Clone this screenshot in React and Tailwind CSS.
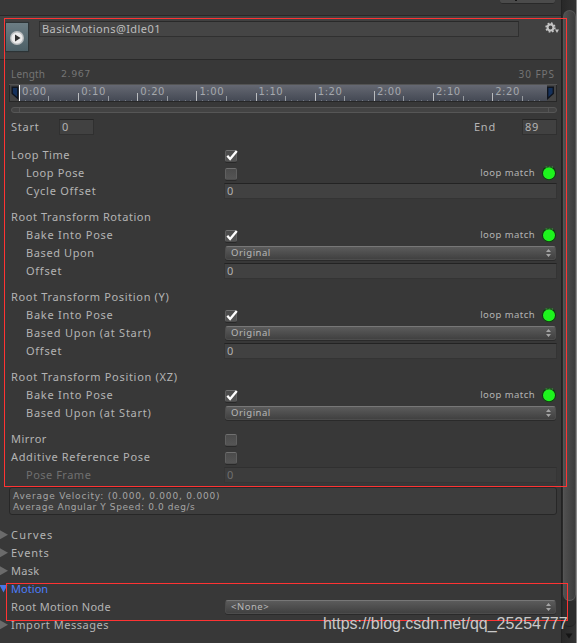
import React from 'react';
import clsx from 'clsx';

const TICKS = Array.from({ length: 90 }, (_, i) => i);
const MARKS = ['0:00', '0:10', '0:20', '1:00', '1:10', '1:20', '2:00', '2:10', '2:20'];
const STEP = 5.915;

const Check = ({ checked }) => (
  <div className="w-3 h-3 mt-1 rounded-[2px] border border-[#707070] border-x-[#606060] border-b-[#4c4c4c] bg-linear-to-b from-[#4b4b4b] to-[#555555] shadow-[0_1px_0_#292929]">
    {checked && (
      <svg className="block -ml-px -mt-px w-[14px] h-3 overflow-visible" viewBox="0 0 14 12">
        <path d="M2.3 5.8 L5.1 9 L11.8 0.9" fill="none" stroke="#ffffff" strokeWidth="2.3" />
      </svg>
    )}
  </div>
);

const Field = ({ value, disabled }) => (
  <div
    className={clsx(
      'w-[333px] h-4 mt-px pl-[2px] border text-[11px] leading-[14px]',
      disabled
        ? 'bg-[#3c3c3c] border-[#353535] border-t-[#303030] text-[#707070]'
        : 'bg-[#414141] border-[#343434] border-t-[#232323] text-[#b0b0b0]'
    )}
  >
    {value}
  </div>
);

const Arrows = () => (
  <svg className="w-[5px] h-[8px] mr-px" viewBox="0 0 5 8">
    <path d="M2.5 0 L5 3 H0 Z M2.5 8 L5 5 H0 Z" fill="#a5a5a5" />
  </svg>
);

const Select = ({ value }) => (
  <div className="w-[331px] h-[14px] mt-0.5 ml-px pl-[5px] pr-[3px] flex items-center justify-between rounded-[3px] border border-[#4c4c4c] border-t-[#777777] bg-linear-to-b from-[#5b5b5b] to-[#414141] shadow-[0_1px_0_#2a2a2a] text-[9.5px] leading-3 text-[#b8b8b8]">
    <span className="tracking-[0.5px]">{value}</span>
    <Arrows />
  </div>
);

const LoopMatch = () => (
  <div className="ml-auto mr-[4px] flex items-center h-[18px]">
    <span className="text-[9.5px] tracking-[0.45px] mr-[6px] mt-px">loop match</span>
    <svg className="w-[16px] h-[16px] -mt-px" viewBox="0 0 16 16">
      <circle cx="8" cy="8" r="7.5" fill="#165c16" opacity="0.65" />
      <circle cx="8" cy="8" r="6.8" fill="#142814" />
      <circle cx="8" cy="8.2" r="6" fill="#1df51d" />
      <path d="M4.5 2 H12" stroke="#4e9450" strokeWidth="1" strokeDasharray="2 1" />
    </svg>
  </div>
);

const Row = ({ label, indent, dim, tracking, children }) => (
  <div className="flex h-[18px] pl-[11px]">
    <div className={clsx('w-[213px] shrink-0 whitespace-nowrap leading-[18px]', indent && 'pl-[15px]', dim && 'text-[#707070]', tracking)}>
      {label}
    </div>
    {children}
  </div>
);

const Toggle = ({ label, indent, checked, match, tracking }) => (
  <Row label={label} indent={indent} tracking={tracking}>
    <div className="ml-px"><Check checked={checked} /></div>
    {match && <LoopMatch />}
  </Row>
);

const Foldout = ({ label, open, tracking }) => (
  <div className={clsx('flex h-[18px] leading-[18px]', open && 'text-[#4c7eff]', tracking)}>
    <svg className="w-[11px] h-[18px] shrink-0" viewBox="0 0 11 18">
      {open
        ? <path d="M0 5 H7.5 L3.5 12.5 L0 6 Z" fill="#4676e6" />
        : <path d="M0 4.2 L8 8.7 L0 13.2 Z" fill="#6b6b6b" />}
    </svg>
    {label}
  </div>
);

const Header = () => (
  <div className="h-[45px] flex bg-[#414141] border-t border-b border-[#292929] shrink-0">
    <div className="w-[22px] h-[28px] ml-[6px] mt-[7px] flex items-center justify-center bg-linear-to-b from-[#6c7d84] to-[#4c5f66] shadow-[0_0_1px_1px_#2d3436]">
      <svg className="w-[16px] h-[16px] mt-[2px]" viewBox="0 0 16 16">
        <circle cx="8" cy="8" r="7" fill="#b9bdbf" />
        <circle cx="8" cy="8" r="5.6" fill="#ececec" />
        <path d="M6 4.5 L11.5 8 L6 11.5 Z" fill="#303030" />
      </svg>
    </div>
    <div className="w-[480px] h-4 ml-[11px] mt-[5px] pl-[2px] border border-[#303030] border-t-[#292929] bg-[#454545] text-[11px] leading-[14px] tracking-[0.42px] text-[#bdbdbd]">
      BasicMotions@Idle01
    </div>
    <svg className="w-[15px] h-[12px] ml-[26px] mt-[6px]" viewBox="0 0 15 12">
      <circle cx="5.5" cy="5.5" r="2.9" fill="none" stroke="#c4c4c4" strokeWidth="2" />
      <circle cx="5.5" cy="5.5" r="4.4" fill="none" stroke="#c4c4c4" strokeWidth="1.6" strokeDasharray="1.75 1.7" />
      <path d="M10 7.5 H14 L12 11 Z" fill="#c4c4c4" />
    </svg>
  </div>
);

const Handle = () => (
  <path d="M0.7 0.7 H6.3 V12 L0.7 7 Z" fill="#15315c" stroke="#10151e" strokeWidth="1.4" />
);

const Timeline = () => (
  <svg className="block w-[548px] h-[18px] ml-[9px] shrink-0" viewBox="0 0 548 18">
    <defs>
      <linearGradient id="ruler" x1="0" y1="0" x2="0" y2="1">
        <stop offset="0" stopColor="#656872" />
        <stop offset="1" stopColor="#444954" />
      </linearGradient>
    </defs>
    <rect width="548" height="18" fill="#272727" />
    <rect x="11" y="1" width="527" height="16" fill="url(#ruler)" />
    <rect x="1" y="1" width="10" height="16" fill="#454545" />
    <rect x="538" y="1" width="9" height="16" fill="#454545" />
    <rect width="548" height="1" fill="#535353" />
    {TICKS.slice(1, 89).map((i) => {
      const h = i % 30 === 0 ? 10 : i % 10 === 0 ? 8 : i % 5 === 0 ? 5 : 1;
      return (
        <rect
          key={i}
          x={Math.round(9.9 + i * STEP)}
          y={17 - h}
          width="1"
          height={h}
          fill={i % 10 === 0 ? '#b9bbbe' : i % 5 === 0 ? '#969a9f' : '#747981'}
        />
      );
    })}
    {MARKS.map((m, i) => (
      <text key={m} x={13 + i * STEP * 10} y="11.4" fontSize="10" letterSpacing="0.55" fill="#a5a8ad" className="font-['DejaVu_Sans',sans-serif]">{m}</text>
    ))}
    <rect x="10" y="1" width="1" height="16" fill="#ffffff" />
    <g transform="translate(2.5 2.5)">
      <Handle />
    </g>
    <g transform="translate(545 2.5) scale(-1 1)">
      <Handle />
    </g>
  </svg>
);

const Scrollbar = () => (
  <div className="w-[16px] shrink-0 flex flex-col items-center bg-linear-to-r from-[#282828] to-[#333333] border-l border-r border-l-[#222222] border-r-[#8a8a8a]">
    <div className="w-[13px] h-[591px] mt-[10px] rounded-full border border-[#555555] border-b-[#656565] bg-linear-to-r from-[#505050] to-[#3c3c3c]" />
    <div className="w-[13px] h-[26px] rounded-b-full bg-[#2d2d2d] border-b border-[#222222]" />
    <svg className="w-[8px] h-[6px] mt-[6px]" viewBox="0 0 8 6">
      <path d="M0.5 0.5 H7.5 L4 5.5 Z" fill="#151515" />
    </svg>
  </div>
);

const Inspector = () => (
  <div className="w-[561px] flex flex-col overflow-hidden">
    <div className="h-[15px] shrink-0 flex justify-end">
      <div className="w-[55px] h-1 mr-[6px] rounded-b-[3px] bg-[#4b4b4b] border-b border-[#292929] flex justify-center">
        <div className="w-0.5 h-px mr-[24px] bg-[#151515]" />
      </div>
    </div>
    <Header />
    <div className="h-[24px] pt-[5px] pl-[11px] pr-[6px] flex text-[10px] leading-[18px] text-[#747474] shrink-0">
      <span className="w-[50px] tracking-[0.2px]">Length</span>
      <span className="text-[9.5px] tracking-[0.55px] font-['DejaVu_Sans',sans-serif]">2.967</span>
      <span className="ml-auto tracking-[0.95px]">30 FPS</span>
    </div>
    <Timeline />
    <div className="w-[546px] h-[6px] mt-[5px] ml-[11px] rounded-full border border-[#565656] bg-[#434343] px-[7px] shrink-0">
      <div className="h-full border-x border-[#545454]" />
    </div>
    <div className="flex h-[18px] mt-[5px] pl-[11px] pr-1 leading-[18px] shrink-0">
      <span className="w-12">Start</span>
      <div className="w-[35px] h-4 mt-px pl-[2px] border border-[#303030] border-t-[#252525] bg-[#414141] leading-[14px]">0</div>
      <span className="ml-auto w-12">End</span>
      <div className="w-[35px] h-4 mt-px pl-[2px] border border-[#303030] border-t-[#252525] bg-[#414141] leading-[14px]">89</div>
    </div>

    <div className="mt-[10px] flex flex-col gap-2 shrink-0">
      <div>
        <Toggle label="Loop Time" checked tracking="tracking-[0.55px]" />
        <Toggle label="Loop Pose" indent match tracking="tracking-[0.6px]" />
        <Row label="Cycle Offset" indent><Field value="0" /></Row>
      </div>
      <div>
        <Row label="Root Transform Rotation" tracking="tracking-[0.58px]" />
        <Toggle label="Bake Into Pose" indent checked match />
        <Row label="Based Upon" indent tracking="tracking-[0.6px]"><Select value="Original" /></Row>
        <Row label="Offset" indent><Field value="0" /></Row>
      </div>
      <div>
        <Row label="Root Transform Position (Y)" tracking="tracking-[0.66px]" />
        <Toggle label="Bake Into Pose" indent checked match />
        <Row label="Based Upon (at Start)" indent><Select value="Original" /></Row>
        <Row label="Offset" indent><Field value="0" /></Row>
      </div>
      <div>
        <Row label="Root Transform Position (XZ)" tracking="tracking-[0.7px]" />
        <Toggle label="Bake Into Pose" indent checked match />
        <Row label="Based Upon (at Start)" indent><Select value="Original" /></Row>
      </div>
      <div>
        <Toggle label="Mirror" tracking="tracking-[0.5px]" />
        <Toggle label="Additive Reference Pose" tracking="tracking-[0.66px]" />
        <Row label="Pose Frame" indent dim tracking="tracking-[0.5px]"><Field value="0" disabled /></Row>
      </div>
    </div>

    <div className="w-[548px] h-[28px] ml-[9px] mt-[3px] pl-[3px] pt-[3px] rounded-[3px] border border-[#272727] bg-[#3d3d3d] text-[9px] leading-[11px] tracking-[0.8px] font-['DejaVu_Sans',sans-serif] text-[#a5a5a5] shrink-0">
      <div>Average Velocity: (0.000, 0.000, 0.000)</div>
      <div className="tracking-[0.6px]">Average Angular Y Speed: 0.0 deg/s</div>
    </div>

    <div className="mt-[11px] shrink-0">
      <Foldout label="Curves" tracking="tracking-[1.2px]" />
      <Foldout label="Events" />
      <Foldout label="Mask" tracking="tracking-[0.3px]" />
      <Foldout label="Motion" open tracking="tracking-[0.05px]" />
      <Row label="Root Motion Node" tracking="tracking-[0.33px]"><Select value="<None>" /></Row>
      <Foldout label="Import Messages" tracking="tracking-[0.55px]" />
    </div>
  </div>
);

export default function App() {
  return (
    <div className="relative w-[577px] h-[643px] overflow-hidden flex bg-[#383838] text-[#b4b4b4] text-[11px] tracking-[0.75px] font-['Noto_Sans',sans-serif]">
      <Inspector />
      <Scrollbar />
      <div className="absolute left-1 top-[18px] w-[563px] h-[469px] border border-[#ff3333]" />
      <div className="absolute left-[6px] top-[583px] w-[562px] h-[38px] border border-[#ff3333]" />
      <div className="absolute left-[323px] top-[614px] whitespace-nowrap text-[16px] leading-5 tracking-[-0.03px] text-[#c8c8c8] font-['Liberation_Sans',sans-serif]">
        https://blog.csdn.net/qq_25254777
      </div>
    </div>
  );
}
